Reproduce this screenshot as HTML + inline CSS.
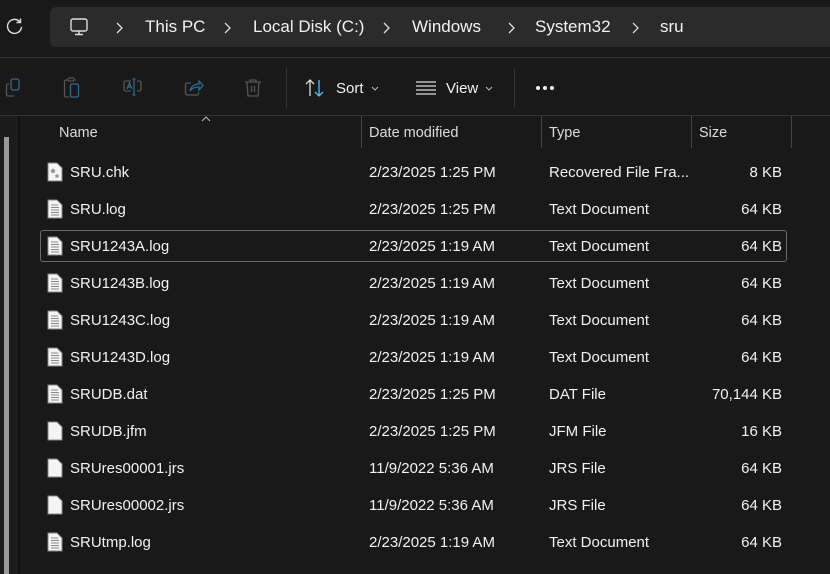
<!DOCTYPE html>
<html><head><style>
*{margin:0;padding:0;box-sizing:border-box}
body{width:830px;height:574px;background:#191919;overflow:hidden;position:relative;font-family:"Liberation Sans",sans-serif;color:#fff}
.a{position:absolute;white-space:nowrap}
.t{font-size:15px;color:#f2f2f2}
.h{font-size:14.5px;color:#dcdcdc}
.vl{position:absolute;width:1px;background:#444}
</style></head><body>
<svg class="a" style="left:6px;top:17px" width="18" height="18" viewBox="0 0 18 18"><path d="M14 5A7 7 0 1 0 15.5 10" fill="none" stroke="#ddd" stroke-width="1.4"/><path d="M14.5 1.5V5.5H10.5" fill="none" stroke="#ddd" stroke-width="1.4"/></svg>
<div class="a" style="left:50px;top:7px;width:790px;height:40px;background:#2b2b2b;border-radius:6px"></div>
<svg class="a" style="left:69px;top:17px" width="20" height="20" viewBox="0 0 20 20"><rect x="2" y="2" width="16" height="12" rx="2" fill="none" stroke="#ddd" stroke-width="1.4"/><path d="M10 14v3M6 17.5h8" stroke="#ddd" stroke-width="1.4"/></svg>
<svg class="a" style="left:115px;top:22px" width="8" height="12" viewBox="0 0 8 12"><path d="M2 1l5 5-5 5" fill="none" stroke="#ddd" stroke-width="1.3"/></svg>
<div class="a t" style="left:145px;top:17px;font-size:17px">This PC</div>
<svg class="a" style="left:223px;top:22px" width="8" height="12" viewBox="0 0 8 12"><path d="M2 1l5 5-5 5" fill="none" stroke="#ddd" stroke-width="1.3"/></svg>
<div class="a t" style="left:253px;top:17px;font-size:17px">Local Disk (C:)</div>
<svg class="a" style="left:382px;top:22px" width="8" height="12" viewBox="0 0 8 12"><path d="M2 1l5 5-5 5" fill="none" stroke="#ddd" stroke-width="1.3"/></svg>
<div class="a t" style="left:412px;top:17px;font-size:17px">Windows</div>
<svg class="a" style="left:507px;top:22px" width="8" height="12" viewBox="0 0 8 12"><path d="M2 1l5 5-5 5" fill="none" stroke="#ddd" stroke-width="1.3"/></svg>
<div class="a t" style="left:535px;top:17px;font-size:17px">System32</div>
<svg class="a" style="left:631px;top:22px" width="8" height="12" viewBox="0 0 8 12"><path d="M2 1l5 5-5 5" fill="none" stroke="#ddd" stroke-width="1.3"/></svg>
<div class="a t" style="left:660px;top:17px;font-size:17px">sru</div>
<div class="a" style="left:0;top:57px;width:830px;height:1px;background:#333"></div>
<svg class="a" style="left:3px;top:77px" width="22" height="22" viewBox="0 0 22 22"><rect x="8" y="2" width="8" height="11" rx="2" fill="none" stroke="#2f6a90" stroke-width="1.3"/><path d="M6 7H5a1.5 1.5 0 0 0-1.5 1.5v9a1.5 1.5 0 0 0 1.5 1.5h6" fill="none" stroke="#555" stroke-width="1.3"/></svg>
<svg class="a" style="left:62px;top:77px" width="22" height="22" viewBox="0 0 22 22"><path d="M6 3H4a1.5 1.5 0 0 0-1.5 1.5v14a1.5 1.5 0 0 0 1.5 1.5h3M13 3h1" fill="none" stroke="#555" stroke-width="1.3"/><rect x="6" y="1" width="6" height="3" rx="1" fill="none" stroke="#555" stroke-width="1.2"/><rect x="8.5" y="7" width="8" height="13" rx="1.5" fill="none" stroke="#2f6a90" stroke-width="1.3"/></svg>
<svg class="a" style="left:122px;top:77px" width="22" height="22" viewBox="0 0 22 22"><path d="M9 4H3.5A1.5 1.5 0 0 0 2 5.5v7A1.5 1.5 0 0 0 3.5 14H9M15 4h2.5A1.5 1.5 0 0 1 19 5.5v7a1.5 1.5 0 0 1-1.5 1.5H15" fill="none" stroke="#555" stroke-width="1.3"/><path d="M5 12l2.5-6 2.5 6M6 10h3M12 2v16M10.5 2h3M10.5 18h3" fill="none" stroke="#2f6a90" stroke-width="1.3"/></svg>
<svg class="a" style="left:183px;top:77px" width="22" height="22" viewBox="0 0 22 22"><path d="M8 6H4a1.5 1.5 0 0 0-1.5 1.5v9A1.5 1.5 0 0 0 4 18h10a1.5 1.5 0 0 0 1.5-1.5V15" fill="none" stroke="#555" stroke-width="1.3"/><path d="M7 14c1-5 5-7 9-7V4l4 4.5-4 4.5V10c-4 0-7 1-9 4z" fill="none" stroke="#2f6a90" stroke-width="1.3"/></svg>
<svg class="a" style="left:242px;top:77px" width="22" height="22" viewBox="0 0 22 22"><path d="M3 5h16M8 5V3h6v2M5 5l1 14h10l1-14M9.5 9v6M12.5 9v6" fill="none" stroke="#555" stroke-width="1.3"/></svg>
<div class="vl" style="left:286px;top:68px;height:40px;background:#333"></div>
<svg class="a" style="left:304px;top:78px" width="22" height="20" viewBox="0 0 22 20"><path d="M6 18V2M2 6l4-4 4 4" fill="none" stroke="#ddd" stroke-width="1.3"/><path d="M15 2v16M11 14l4 4 4-4" fill="none" stroke="#4cc2ff" stroke-width="1.3"/></svg>
<div class="a t" style="left:336px;top:80px;font-size:15px">Sort</div>
<svg class="a" style="left:371px;top:86px" width="8" height="5" viewBox="0 0 8 5"><path d="M1 1l3 3 3-3" fill="none" stroke="#bbb" stroke-width="1"/></svg>
<svg class="a" style="left:415px;top:80px" width="22" height="16" viewBox="0 0 22 16"><path d="M1 2h20M1 6h20M1 10h20M1 14h20" stroke="#ddd" stroke-width="1.2"/></svg>
<div class="a t" style="left:446px;top:80px;font-size:15px">View</div>
<svg class="a" style="left:485px;top:86px" width="8" height="5" viewBox="0 0 8 5"><path d="M1 1l3 3 3-3" fill="none" stroke="#bbb" stroke-width="1"/></svg>
<div class="vl" style="left:514px;top:68px;height:40px;background:#333"></div>
<svg class="a" style="left:535px;top:85px" width="22" height="6"><circle cx="3" cy="3" r="2" fill="#eee"/><circle cx="10" cy="3" r="2" fill="#eee"/><circle cx="17" cy="3" r="2" fill="#eee"/></svg>
<div class="a" style="left:0;top:115px;width:830px;height:1px;background:#333"></div>
<div class="a" style="left:0;top:116px;width:18px;height:458px;background:#1c1c1c"></div>
<div class="a" style="left:4px;top:137px;width:5px;height:437px;background:#9a9a9a"></div>
<div class="a" style="left:18px;top:116px;width:2px;height:458px;background:#111"></div>
<svg class="a" style="left:201px;top:116px" width="10" height="6" viewBox="0 0 10 6"><path d="M1 5l4-4 4 4" fill="none" stroke="#bbb" stroke-width="1"/></svg>
<div class="a h" style="left:59px;top:125px">Name</div>
<div class="vl" style="left:361px;top:116px;height:32px"></div>
<div class="a h" style="left:369px;top:125px">Date modified</div>
<div class="vl" style="left:541px;top:116px;height:32px"></div>
<div class="a h" style="left:549px;top:125px">Type</div>
<div class="vl" style="left:691px;top:116px;height:32px"></div>
<div class="a h" style="left:699px;top:125px">Size</div>
<div class="vl" style="left:791px;top:116px;height:32px"></div>
<div class="a" style="left:40px;top:230px;width:747px;height:32px;border:1px solid #6a6a6a;border-radius:3px"></div>
<div id="rows"></div>
<script>
var d=[["SRU.chk","2/23/2025 1:25 PM","Recovered File Fra...","8 KB","g"],["SRU.log","2/23/2025 1:25 PM","Text Document","64 KB","l"],["SRU1243A.log","2/23/2025 1:19 AM","Text Document","64 KB","l"],["SRU1243B.log","2/23/2025 1:19 AM","Text Document","64 KB","l"],["SRU1243C.log","2/23/2025 1:19 AM","Text Document","64 KB","l"],["SRU1243D.log","2/23/2025 1:19 AM","Text Document","64 KB","l"],["SRUDB.dat","2/23/2025 1:25 PM","DAT File","70,144 KB","l"],["SRUDB.jfm","2/23/2025 1:25 PM","JFM File","16 KB","b"],["SRUres00001.jrs","11/9/2022 5:36 AM","JRS File","64 KB","b"],["SRUres00002.jrs","11/9/2022 5:36 AM","JRS File","64 KB","b"],["SRUtmp.log","2/23/2025 1:19 AM","Text Document","64 KB","l"]];
var h="";
d.forEach(function(r,i){var y=164+i*37;
var ic='<svg class="a" style="left:47px;top:'+(y-2)+'px" width="16" height="20" viewBox="0 0 16 20"><path d="M1 1h9l5 5v13H1z" fill="#f4f4f4" stroke="#888" stroke-width="1"/>';
if(r[4]=="l")ic+='<path d="M4 6h7M4 8.5h8M4 11h8M4 13.5h8M4 16h8" stroke="#888" stroke-width="1"/>';
if(r[4]=="g")ic+='<circle cx="6" cy="9" r="2.2" fill="#999"/><circle cx="10" cy="14" r="1.8" fill="#999"/>';
ic+='</svg>';
h+=ic+'<div class="a t" style="left:70px;top:'+y+'px">'+r[0]+'</div><div class="a t" style="left:369px;top:'+y+'px">'+r[1]+'</div><div class="a t" style="left:549px;top:'+y+'px">'+r[2]+'</div><div class="a t" style="right:48px;top:'+y+'px">'+r[3]+'</div>';});
document.getElementById("rows").innerHTML=h;
</script>
</body></html>
